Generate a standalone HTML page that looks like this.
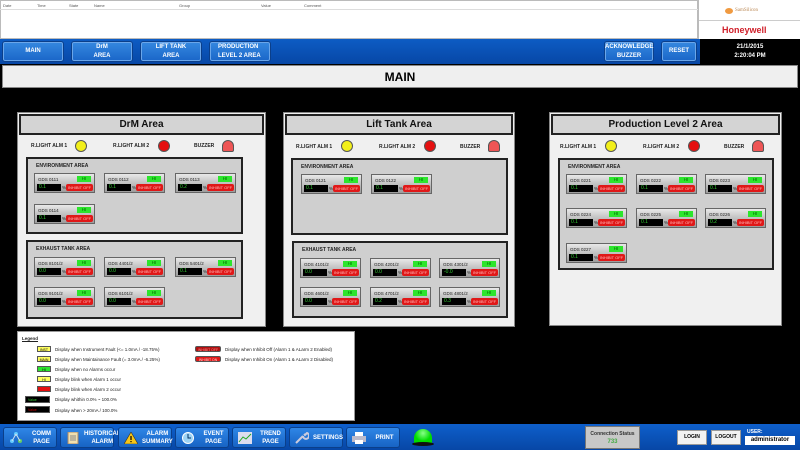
<!DOCTYPE html>
<html><head><meta charset="utf-8"><style>
*{margin:0;padding:0;box-sizing:border-box}
body{width:800px;height:450px;background:#000;position:relative;overflow:hidden;font-family:"Liberation Sans",sans-serif}
.a{position:absolute}
.btn{position:absolute;background:linear-gradient(#3588e0,#1a66c8);border:1px solid #0b3f8a;border-radius:3px;color:#fff;font-size:6px;font-weight:bold;text-align:center;display:flex;flex-direction:column;justify-content:center;line-height:9px;box-shadow:inset 0 0 0 1px #6aa6ea}
.panel{position:absolute;background:#f0f0f0;border:1px solid #888}
.ptitle{position:absolute;background:#d4d4d4;border:2px solid #222;font-size:10px;font-weight:bold;text-align:center;line-height:17px;color:#111}
.lbl{position:absolute;font-size:5px;font-weight:bold;color:#222}
.area{position:absolute;background:#cfcfcf;border:2px solid #222}
.atitle{position:absolute;left:8px;top:4px;font-size:5px;font-weight:bold;color:#222}
.led{position:absolute;width:12px;height:12px;border-radius:50%;border:1px solid #555}
.c{position:absolute;width:61px;height:20px;background:linear-gradient(#e8e8e8,#9c9c9c);border:1px solid #666;font-size:4.5px;color:#222}
.c .n{position:absolute;left:3px;top:3px}
.c .hi{position:absolute;right:3px;top:2px;width:14px;height:6px;background:#2de52d;color:#060;text-align:center;line-height:6px}
.c .v{position:absolute;left:2px;top:10px;width:24px;height:7px;background:#000;color:#3c3;line-height:7px;padding-left:2px;font-size:5px}
.c .p{position:absolute;left:27px;top:11px}
.c .io{position:absolute;left:31px;top:10px;width:27px;height:7px;background:#e01818;color:#fbb;border-radius:2px;text-align:center;line-height:7px;font-size:4px}
.fb{position:absolute;top:427px;height:21px;width:54px;background:linear-gradient(#2f86e6,#1763c4);border:1px solid #0b3f8a;border-radius:3px;color:#fff;font-size:6px;font-weight:bold;line-height:8px;display:flex;align-items:center}
.fb .ic{width:14px;height:12px;margin:0 4px 0 5px;flex:none}
.fb .t{flex:1;text-align:center}
.lg{position:absolute;font-size:4.5px;color:#222}
.sw{position:absolute;width:14px;height:6px;font-size:3.5px;text-align:center;line-height:6px;border:1px solid #555}
</style></head><body>
<div class="a" style="left:0;top:0;width:698px;height:39px;background:#fff;border:1px solid #bbb"></div>
<div class="a" style="left:0;top:9px;width:698px;height:1px;background:#ddd"></div>
<div class="a" style="top:3px;font-size:4px;color:#555;left:3px">Date</div>
<div class="a" style="top:3px;font-size:4px;color:#555;left:37px">Time</div>
<div class="a" style="top:3px;font-size:4px;color:#555;left:69px">State</div>
<div class="a" style="top:3px;font-size:4px;color:#555;left:94px">Name</div>
<div class="a" style="top:3px;font-size:4px;color:#555;left:179px">Group</div>
<div class="a" style="top:3px;font-size:4px;color:#555;left:261px">Value</div>
<div class="a" style="top:3px;font-size:4px;color:#555;left:304px">Comment</div>
<div class="a" style="left:698px;top:0;width:102px;height:39px;background:#fff;border-left:1px solid #bbb"></div>
<div class="a" style="left:699px;top:20px;width:101px;height:1px;background:#ccc"></div>
<div class="a" style="left:725px;top:8px;width:8px;height:6px;border-radius:50%;background:#f09a40"></div>
<div class="a" style="left:735px;top:8px;font-size:5px;color:#b85;font-family:'Liberation Serif',serif">SamSilicon</div>
<div class="a" style="left:722px;top:25px;font-size:9px;font-weight:bold;color:#d0202a">Honeywell</div>
<div class="a" style="left:0;top:39px;width:800px;height:25px;background:linear-gradient(#0d5cc4,#0747a6)"></div>
<div class="btn" style="left:2px;top:41px;width:62px;height:21px">MAIN</div>
<div class="btn" style="left:71px;top:41px;width:62px;height:21px">DrM<br>AREA</div>
<div class="btn" style="left:140px;top:41px;width:62px;height:21px">LIFT TANK<br>AREA</div>
<div class="btn" style="left:209px;top:41px;width:62px;height:21px;text-align:left;padding-left:8px">PRODUCTION<br>LEVEL 2 AREA</div>
<div class="btn" style="left:604px;top:41px;width:50px;height:21px">ACKNOWLEDGE<br>BUZZER</div>
<div class="btn" style="left:661px;top:41px;width:36px;height:21px">RESET</div>
<div class="a" style="left:700px;top:39px;width:100px;height:25px;background:#000;color:#fff;font-size:6px;font-weight:bold;text-align:center;line-height:9px;padding-top:4px">21/1/2015<br>2:20:04 PM</div>
<div class="a" style="left:2px;top:65px;width:796px;height:23px;background:#efefef;border:1px solid #888;text-align:center;font-size:12px;font-weight:bold;line-height:22px;color:#000">MAIN</div>

<div class="panel" style="left:17px;top:112px;width:249px;height:215px"></div>
<div class="ptitle" style="left:19px;top:114px;width:245px;height:21px">DrM Area</div>
<div class="lbl" style="left:31px;top:143px">R.LIGHT ALM 1</div><div class="led" style="left:75px;top:140px;background:#f2ef1a"></div>
<div class="lbl" style="left:113px;top:143px">R.LIGHT ALM 2</div><div class="led" style="left:158px;top:140px;background:#e51010"></div>
<div class="lbl" style="left:194px;top:143px">BUZZER</div><div class="led" style="left:222px;top:140px;background:#e55;border-radius:50% 50% 2px 2px"></div>
<div class="area" style="left:26px;top:157px;width:217px;height:77px"><div class="atitle">ENVIRONMENT AREA</div></div>
<div class="area" style="left:26px;top:240px;width:217px;height:79px"><div class="atitle">EXHAUST TANK AREA</div></div>
<div class="c" style="left:34px;top:173px"><span class="n">GDS 0111</span><span class="hi">HI</span><span class="v">0.1</span><span class="p">%</span><span class="io">INHIBIT OFF</span></div>
<div class="c" style="left:104px;top:173px"><span class="n">GDS 0112</span><span class="hi">HI</span><span class="v">0.1</span><span class="p">%</span><span class="io">INHIBIT OFF</span></div>
<div class="c" style="left:175px;top:173px"><span class="n">GDS 0113</span><span class="hi">HI</span><span class="v">0.2</span><span class="p">%</span><span class="io">INHIBIT OFF</span></div>
<div class="c" style="left:34px;top:204px"><span class="n">GDS 0114</span><span class="hi">HI</span><span class="v">0.1</span><span class="p">%</span><span class="io">INHIBIT OFF</span></div>
<div class="c" style="left:34px;top:257px"><span class="n">GDS 8101/2</span><span class="hi">HI</span><span class="v">0.0</span><span class="p">%</span><span class="io">INHIBIT OFF</span></div>
<div class="c" style="left:104px;top:257px"><span class="n">GDS 4401/2</span><span class="hi">HI</span><span class="v">0.0</span><span class="p">%</span><span class="io">INHIBIT OFF</span></div>
<div class="c" style="left:175px;top:257px"><span class="n">GDS 5401/2</span><span class="hi">HI</span><span class="v">0.1</span><span class="p">%</span><span class="io">INHIBIT OFF</span></div>
<div class="c" style="left:34px;top:287px"><span class="n">GDS 9101/2</span><span class="hi">HI</span><span class="v">0.0</span><span class="p">%</span><span class="io">INHIBIT OFF</span></div>
<div class="c" style="left:104px;top:287px"><span class="n">GDS 6101/2</span><span class="hi">HI</span><span class="v">0.0</span><span class="p">%</span><span class="io">INHIBIT OFF</span></div>

<div class="panel" style="left:283px;top:112px;width:232px;height:215px"></div>
<div class="ptitle" style="left:285px;top:114px;width:228px;height:21px">Lift Tank Area</div>
<div class="lbl" style="left:296px;top:144px">R.LIGHT ALM 1</div><div class="led" style="left:341px;top:140px;background:#f2ef1a"></div>
<div class="lbl" style="left:379px;top:144px">R.LIGHT ALM 2</div><div class="led" style="left:424px;top:140px;background:#e51010"></div>
<div class="lbl" style="left:460px;top:144px">BUZZER</div><div class="led" style="left:488px;top:140px;background:#e55;border-radius:50% 50% 2px 2px"></div>
<div class="area" style="left:291px;top:158px;width:217px;height:77px"><div class="atitle">ENVIRONMENT AREA</div></div>
<div class="area" style="left:292px;top:241px;width:216px;height:77px"><div class="atitle">EXHAUST TANK AREA</div></div>
<div class="c" style="left:301px;top:174px"><span class="n">GDS 0121</span><span class="hi">HI</span><span class="v">0.1</span><span class="p">%</span><span class="io">INHIBIT OFF</span></div>
<div class="c" style="left:371px;top:174px"><span class="n">GDS 0122</span><span class="hi">HI</span><span class="v">0.1</span><span class="p">%</span><span class="io">INHIBIT OFF</span></div>
<div class="c" style="left:300px;top:258px"><span class="n">GDS 4101/2</span><span class="hi">HI</span><span class="v">0.0</span><span class="p">%</span><span class="io">INHIBIT OFF</span></div>
<div class="c" style="left:370px;top:258px"><span class="n">GDS 4201/2</span><span class="hi">HI</span><span class="v">0.0</span><span class="p">%</span><span class="io">INHIBIT OFF</span></div>
<div class="c" style="left:439px;top:258px"><span class="n">GDS 4301/2</span><span class="hi">HI</span><span class="v">-0.0</span><span class="p">%</span><span class="io">INHIBIT OFF</span></div>
<div class="c" style="left:300px;top:287px"><span class="n">GDS 4601/2</span><span class="hi">HI</span><span class="v">0.0</span><span class="p">%</span><span class="io">INHIBIT OFF</span></div>
<div class="c" style="left:370px;top:287px"><span class="n">GDS 4701/2</span><span class="hi">HI</span><span class="v">0.2</span><span class="p">%</span><span class="io">INHIBIT OFF</span></div>
<div class="c" style="left:439px;top:287px"><span class="n">GDS 4801/2</span><span class="hi">HI</span><span class="v">0.3</span><span class="p">%</span><span class="io">INHIBIT OFF</span></div>

<div class="panel" style="left:549px;top:112px;width:233px;height:214px"></div>
<div class="ptitle" style="left:551px;top:114px;width:229px;height:21px">Production Level 2 Area</div>
<div class="lbl" style="left:560px;top:144px">R.LIGHT ALM 1</div><div class="led" style="left:605px;top:140px;background:#f2ef1a"></div>
<div class="lbl" style="left:643px;top:144px">R.LIGHT ALM 2</div><div class="led" style="left:688px;top:140px;background:#e51010"></div>
<div class="lbl" style="left:724px;top:144px">BUZZER</div><div class="led" style="left:752px;top:140px;background:#e55;border-radius:50% 50% 2px 2px"></div>
<div class="area" style="left:558px;top:158px;width:216px;height:112px"><div class="atitle">ENVIRONMENT AREA</div></div>
<div class="c" style="left:566px;top:174px"><span class="n">GDS 0221</span><span class="hi">HI</span><span class="v">0.1</span><span class="p">%</span><span class="io">INHIBIT OFF</span></div>
<div class="c" style="left:636px;top:174px"><span class="n">GDS 0222</span><span class="hi">HI</span><span class="v">0.1</span><span class="p">%</span><span class="io">INHIBIT OFF</span></div>
<div class="c" style="left:705px;top:174px"><span class="n">GDS 0223</span><span class="hi">HI</span><span class="v">0.1</span><span class="p">%</span><span class="io">INHIBIT OFF</span></div>
<div class="c" style="left:566px;top:208px"><span class="n">GDS 0224</span><span class="hi">HI</span><span class="v">0.1</span><span class="p">%</span><span class="io">INHIBIT OFF</span></div>
<div class="c" style="left:636px;top:208px"><span class="n">GDS 0225</span><span class="hi">HI</span><span class="v">0.1</span><span class="p">%</span><span class="io">INHIBIT OFF</span></div>
<div class="c" style="left:705px;top:208px"><span class="n">GDS 0226</span><span class="hi">HI</span><span class="v">0.2</span><span class="p">%</span><span class="io">INHIBIT OFF</span></div>
<div class="c" style="left:566px;top:243px"><span class="n">GDS 0227</span><span class="hi">HI</span><span class="v">0.1</span><span class="p">%</span><span class="io">INHIBIT OFF</span></div>

<div class="a" style="left:17px;top:331px;width:338px;height:90px;background:#fff;border:1px solid #999"></div>
<div class="lg" style="left:22px;top:336px;text-decoration:underline;font-weight:bold">Legend</div>
<div class="sw" style="left:37px;top:346px;background:#ffff60">INST</div><div class="lg" style="left:55px;top:347px">Display when Instrument Fault (&lt;= 1.0mA / -18.75%)</div>
<div class="sw" style="left:37px;top:356px;background:#ffff60">MAIN</div><div class="lg" style="left:55px;top:357px">Display when Maintainance Fault (= 3.0mA / -6.25%)</div>
<div class="sw" style="left:37px;top:366px;background:#2de52d">HI</div><div class="lg" style="left:55px;top:367px">Display when no Alarms occur</div>
<div class="sw" style="left:37px;top:376px;background:#ffff60">HI</div><div class="lg" style="left:55px;top:377px">Display blink when Alarm 1 occur</div>
<div class="sw" style="left:37px;top:386px;background:#e51010;color:#e51010">HI</div><div class="lg" style="left:55px;top:387px">Display blink when Alarm 2 occur</div>
<div class="sw" style="left:25px;top:396px;width:25px;height:7px;background:#000;color:#3c3;text-align:left;padding-left:2px">Value</div><div class="lg" style="left:55px;top:397px">Display whithin 0.0% ~ 100.0%</div>
<div class="sw" style="left:25px;top:406px;width:25px;height:7px;background:#000;color:#c00;text-align:left;padding-left:2px">Value</div><div class="lg" style="left:55px;top:408px">Display when &gt; 20mA / 100.0%</div>
<div class="sw" style="left:195px;top:346px;width:26px;background:#b01010;color:#f88;border-radius:2px">INHIBIT OFF</div><div class="lg" style="left:225px;top:347px">Display when Inhibit Off (Alarm 1 &amp; ALarm 2 Enabled)</div>
<div class="sw" style="left:195px;top:356px;width:26px;background:#e01818;color:#fcc;border-radius:2px">INHIBIT ON</div><div class="lg" style="left:225px;top:357px">Display when Inhibit On (Alarm 1 &amp; ALarm 2 Disabled)</div>

<div class="a" style="left:0;top:424px;width:800px;height:26px;background:linear-gradient(#0e5fcb,#0747a6)"></div>
<div class="fb" style="left:3px"><svg class="ic" viewBox="0 0 14 12"><circle cx="7" cy="2" r="2" fill="#6cf"/><circle cx="3" cy="9" r="2" fill="#6cf"/><circle cx="11" cy="9" r="2" fill="#6c6"/><path d="M7 2L3 9M7 2L11 9" stroke="#cde" stroke-width="1"/></svg><span class="t">COMM<br>PAGE</span></div>
<div class="fb" style="left:60px"><svg class="ic" viewBox="0 0 14 12"><rect x="2" y="0" width="10" height="12" fill="#f0e0b0" stroke="#a86"/><path d="M4 4h6M4 6h6M4 8h6" stroke="#888"/></svg><span class="t">HISTORICAL<br>ALARM</span></div>
<div class="fb" style="left:118px"><svg class="ic" viewBox="0 0 14 12"><path d="M7 0L14 12H0Z" fill="#f5c518" stroke="#333" stroke-width=".6"/><rect x="6.4" y="4" width="1.2" height="4" fill="#000"/><rect x="6.4" y="9" width="1.2" height="1.2" fill="#000"/></svg><span class="t">ALARM<br>SUMMARY</span></div>
<div class="fb" style="left:175px"><svg class="ic" viewBox="0 0 14 12"><circle cx="7" cy="6" r="5.5" fill="#9cd3f5" stroke="#fff"/><path d="M7 2v4h3" stroke="#036" fill="none"/></svg><span class="t">EVENT<br>PAGE</span></div>
<div class="fb" style="left:232px"><svg class="ic" viewBox="0 0 14 12"><rect x="0" y="0" width="14" height="12" fill="#dde"/><path d="M1 10L5 5L8 7L13 2" stroke="#2a2" fill="none"/></svg><span class="t">TREND<br>PAGE</span></div>
<div class="fb" style="left:289px"><svg class="ic" viewBox="0 0 14 12"><path d="M1 11L8 4M8 4a3 3 0 1 0 4-3l-2 2-1-1" stroke="#ccd" stroke-width="2" fill="none"/></svg><span class="t">SETTINGS</span></div>
<div class="fb" style="left:346px"><svg class="ic" viewBox="0 0 14 12"><rect x="3" y="0" width="8" height="5" fill="#fff"/><rect x="0" y="4" width="14" height="6" fill="#bbc"/><rect x="3" y="8" width="8" height="4" fill="#fff"/></svg><span class="t">PRINT</span></div>
<div class="a" style="left:414px;top:429px;width:18px;height:14px;background:radial-gradient(circle at 50% 30%,#8f8,#0d0 60%);border-radius:9px 9px 0 0"></div>
<div class="a" style="left:412px;top:442px;width:22px;height:4px;background:#111;border-radius:50%"></div>
<div class="a" style="left:585px;top:426px;width:55px;height:23px;background:#c8c8c8;border:1px solid #777;text-align:center;font-size:5px;font-weight:bold;color:#333;line-height:8px;padding-top:3px">Connection Status<br><span style="color:#4a4;font-size:6px">733</span></div>
<div class="a" style="left:677px;top:430px;width:30px;height:15px;background:#f2f2f2;border:1px solid #999;font-size:5px;font-weight:bold;text-align:center;line-height:13px">LOGIN</div>
<div class="a" style="left:711px;top:430px;width:30px;height:15px;background:#f2f2f2;border:1px solid #999;font-size:5px;font-weight:bold;text-align:center;line-height:13px">LOGOUT</div>
<div class="a" style="left:747px;top:429px;font-size:5px;font-weight:bold;color:#fff">USER:</div>
<div class="a" style="left:745px;top:436px;width:50px;height:9px;background:#fff;font-size:6px;font-weight:bold;text-align:center;line-height:9px">administrator</div>
</body></html>
